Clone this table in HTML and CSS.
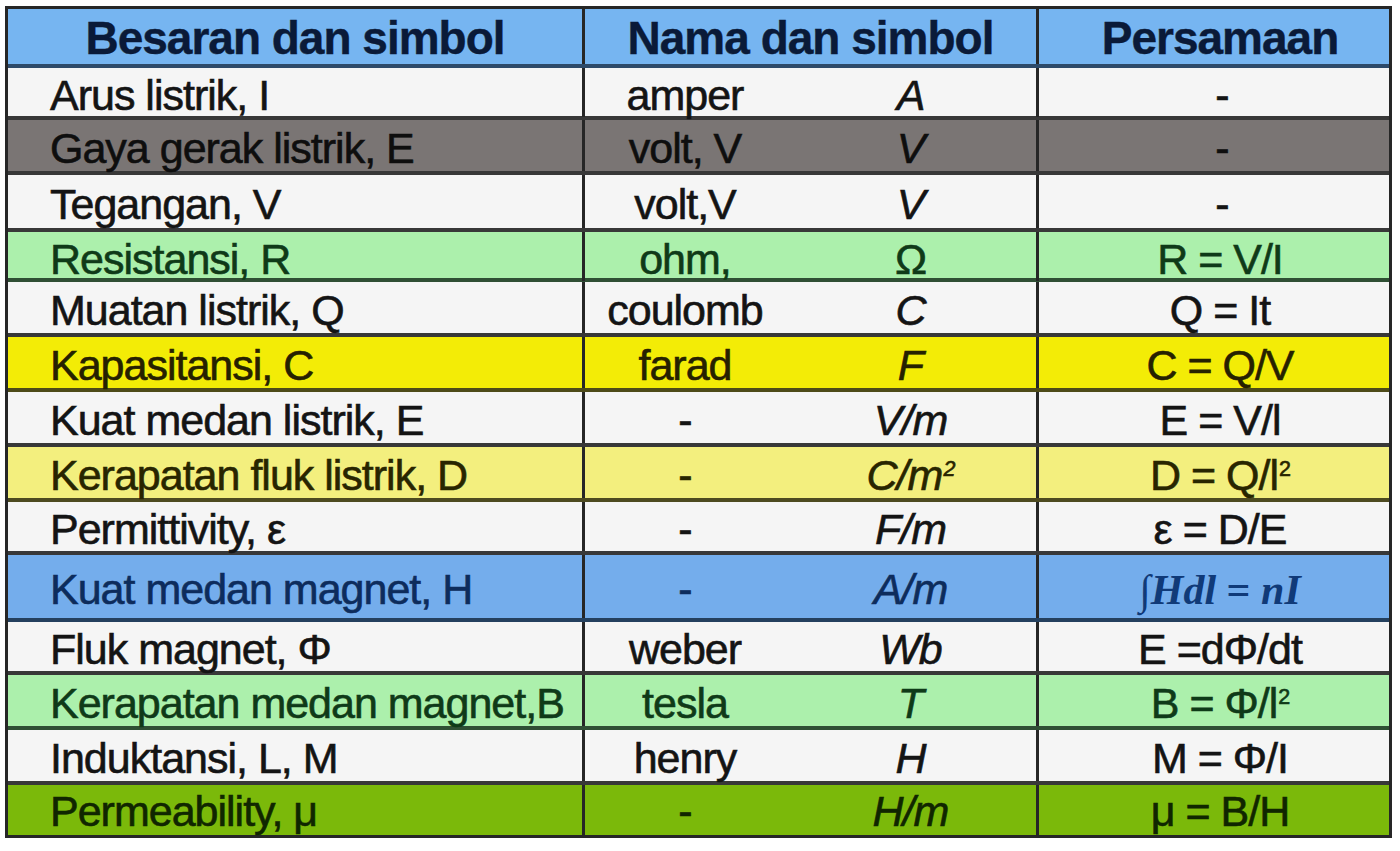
FILE: index.html
```html
<!DOCTYPE html>
<html lang="id">
<head>
<meta charset="utf-8">
<title>Besaran listrik dan magnet</title>
<link rel="stylesheet" href="styles.css">
</head>
<body>
<div class="table">
  <div class="row head">
    <div class="cell c1">Besaran dan simbol</div>
    <div class="cell c2h">Nama dan simbol</div>
    <div class="cell c3">Persamaan</div>
  </div>
  <div class="row white h52">
    <div class="cell c1">Arus listrik, I</div>
    <div class="cell c2a">amper</div>
    <div class="cell c2b sym">A</div>
    <div class="cell c3"><span class="dash">-</span></div>
  </div>
  <div class="row grey h55">
    <div class="cell c1">Gaya gerak listrik, E</div>
    <div class="cell c2a">volt, V</div>
    <div class="cell c2b sym">V</div>
    <div class="cell c3"><span class="dash">-</span></div>
  </div>
  <div class="row white h57">
    <div class="cell c1">Tegangan, V</div>
    <div class="cell c2a">volt,V</div>
    <div class="cell c2b sym">V</div>
    <div class="cell c3"><span class="dash">-</span></div>
  </div>
  <div class="row lgreen h50">
    <div class="cell c1">Resistansi, R</div>
    <div class="cell c2a">ohm,</div>
    <div class="cell c2b">Ω</div>
    <div class="cell c3">R = V/I</div>
  </div>
  <div class="row white h55">
    <div class="cell c1">Muatan listrik, Q</div>
    <div class="cell c2a">coulomb</div>
    <div class="cell c2b sym">C</div>
    <div class="cell c3">Q = It</div>
  </div>
  <div class="row yellow h55">
    <div class="cell c1">Kapasitansi, C</div>
    <div class="cell c2a">farad</div>
    <div class="cell c2b sym">F</div>
    <div class="cell c3">C = Q/V</div>
  </div>
  <div class="row white h55">
    <div class="cell c1">Kuat medan listrik, E</div>
    <div class="cell c2a">-</div>
    <div class="cell c2b sym">V/m</div>
    <div class="cell c3">E = V/l</div>
  </div>
  <div class="row pyellow h55">
    <div class="cell c1">Kerapatan fluk listrik, D</div>
    <div class="cell c2a">-</div>
    <div class="cell c2b sym">C/m<sup>2</sup></div>
    <div class="cell c3">D = Q/l<sup>2</sup></div>
  </div>
  <div class="row white h53">
    <div class="cell c1">Permittivity, ε</div>
    <div class="cell c2a">-</div>
    <div class="cell c2b sym">F/m</div>
    <div class="cell c3">ε = D/E</div>
  </div>
  <div class="row blue h67">
    <div class="cell c1">Kuat medan magnet, H</div>
    <div class="cell c2a">-</div>
    <div class="cell c2b sym">A/m</div>
    <div class="cell c3"><span class="formula">∫<span class="fi">Hdl</span> = <span class="fi">nI</span></span></div>
  </div>
  <div class="row white h53">
    <div class="cell c1">Fluk magnet, Φ</div>
    <div class="cell c2a">weber</div>
    <div class="cell c2b sym">Wb</div>
    <div class="cell c3">E =dΦ/dt</div>
  </div>
  <div class="row lgreen h55">
    <div class="cell c1">Kerapatan medan magnet,B</div>
    <div class="cell c2a">tesla</div>
    <div class="cell c2b sym">T</div>
    <div class="cell c3">B = Φ/l<sup>2</sup></div>
  </div>
  <div class="row white h55">
    <div class="cell c1">Induktansi, L, M</div>
    <div class="cell c2a">henry</div>
    <div class="cell c2b sym">H</div>
    <div class="cell c3">M = Φ/I</div>
  </div>
  <div class="row green h50 last">
    <div class="cell c1">Permeability, μ</div>
    <div class="cell c2a">-</div>
    <div class="cell c2b sym">H/m</div>
    <div class="cell c3">μ = B/H</div>
  </div>
</div>
</body>
</html>
```

FILE: styles.css
```css
html, body {
  margin: 0;
  padding: 0;
  background: #ffffff;
}

body {
  font-family: "Liberation Sans", Arial, sans-serif;
}

.table {
  margin: 6px 0 0 5px;
  width: 1387px;
  box-sizing: border-box;
  border: 3px solid #262626;
  display: flex;
  flex-direction: column;
}

.row {
  display: grid;
  grid-template-columns: 577px 200px 254px 1fr;
  box-sizing: border-box;
  border-bottom: 4px solid #383838;
  font-size: 43px;
  letter-spacing: -1px;
  color: #141414;
  -webkit-text-stroke: 0.6px currentColor;
}

.row.last {
  border-bottom: none;
}

.row.head {
  grid-template-columns: 577px 454px 1fr;
  height: 59px;
  background: #76b5f1;
  color: #0a1a38;
  font-weight: bold;
  font-size: 46px;
  -webkit-text-stroke: 0.4px currentColor;
  border-bottom-color: #2d4a6a;
}

.h50 { height: 50px; }
.h52 { height: 52px; }
.h53 { height: 53px; }
.h55 { height: 55px; }
.h57 { height: 57px; }
.h67 { height: 67px; }

.cell {
  display: flex;
  align-items: center;
  justify-content: center;
  white-space: nowrap;
  line-height: 1;
  padding-top: 6px;
}

.head > .cell,
.last > .cell {
  padding-top: 3px;
}

.c1 {
  justify-content: flex-start;
  padding-left: 42px;
  border-right: 3px solid #262626;
}

.head .c1 {
  justify-content: center;
  padding-left: 0;
}

.c2b,
.c2h {
  border-right: 3px solid #262626;
}

.c3 {
  padding-left: 12px;
}

.sym {
  font-style: italic;
}

sup {
  font-size: 0.5em;
  line-height: 0;
  position: relative;
  top: -0.3em;
  vertical-align: top;
  margin-left: 1px;
}

.dash {
  padding-left: 4px;
}

.formula {
  font-family: "Liberation Serif", "Times New Roman", serif;
  font-weight: bold;
  font-size: 42px;
  letter-spacing: 0;
  color: #103a78;
  -webkit-text-stroke: 0;
}

.formula .fi {
  font-style: italic;
}

.white { background: #f5f5f5; }
.grey { background: #7a7574; color: #0e0e0e; }
.lgreen { background: #acf0ac; color: #0f3a18; border-bottom-color: #2f4f34; }
.yellow { background: #f3ec06; color: #262100; border-bottom-color: #4d4a18; }
.pyellow { background: #f3ef7e; color: #282500; border-bottom-color: #4d4a20; }
.blue { background: #74adec; color: #0d2c5c; border-bottom-color: #24405e; }
.green { background: #7bb90a; color: #102600; }
```
